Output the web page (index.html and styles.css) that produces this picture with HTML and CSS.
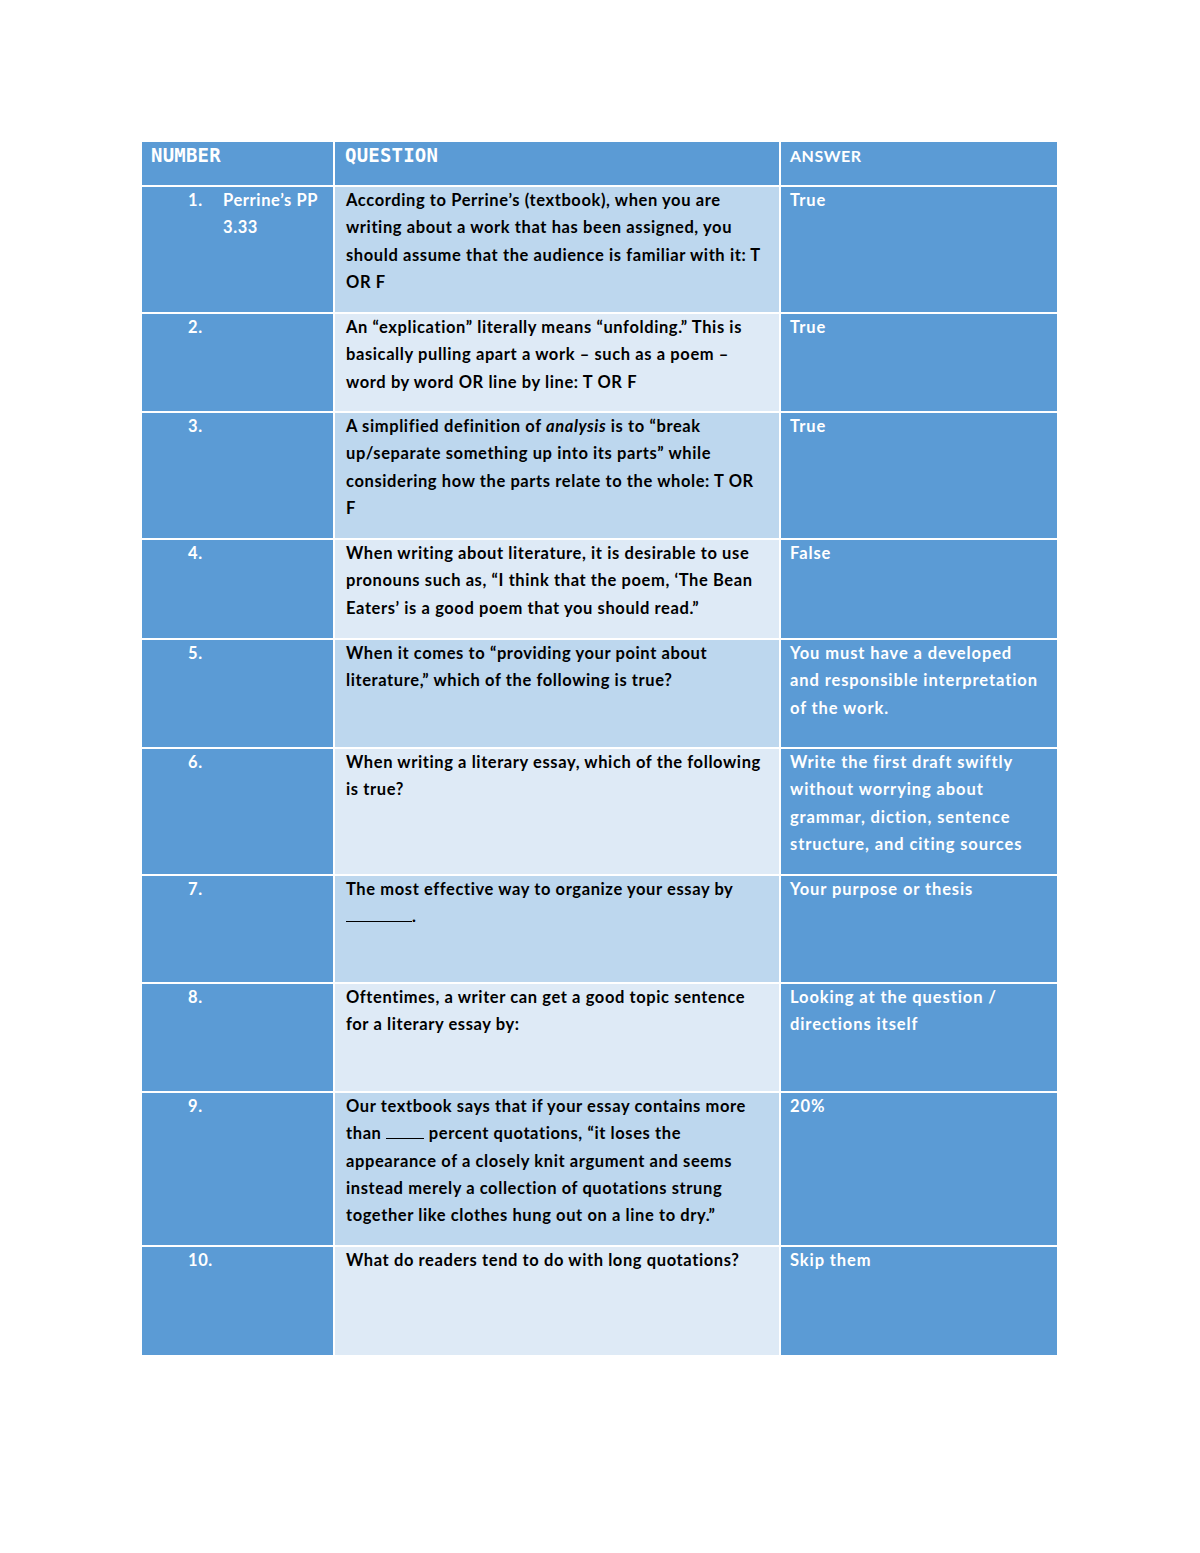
FILE: index.html
```html
<!DOCTYPE html>
<html>
<head>
<meta charset="utf-8">
<link rel="stylesheet" href="styles.css">
</head>
<body>
<div class="page">
  <div class="table">
    <div class="cell head h-num">NUMBER</div>
    <div class="cell head h-q">QUESTION</div>
    <div class="cell head h-a">ANSWER</div>

    <div class="cell num r1"><span class="n">1.</span><span class="nt">Perrine’s PP<br>3.33</span></div>
    <div class="cell q dark">According to Perrine’s (textbook), when you are<br>writing about a work that has been assigned, you<br>should assume that the audience is familiar with it: T<br>OR F</div>
    <div class="cell a">True</div>

    <div class="cell num r2"><span class="n">2.</span></div>
    <div class="cell q light">An “explication” literally means “unfolding.” This is<br>basically pulling apart a work – such as a poem –<br>word by word OR line by line: T OR F</div>
    <div class="cell a">True</div>

    <div class="cell num r3"><span class="n">3.</span></div>
    <div class="cell q dark">A simplified definition of <i>analysis</i> is to “break<br>up/separate something up into its parts” while<br>considering how the parts relate to the whole: T OR<br>F</div>
    <div class="cell a">True</div>

    <div class="cell num r4"><span class="n">4.</span></div>
    <div class="cell q light">When writing about literature, it is desirable to use<br>pronouns such as, “I think that the poem, ‘The Bean<br>Eaters’ is a good poem that you should read.”</div>
    <div class="cell a">False</div>

    <div class="cell num r5"><span class="n">5.</span></div>
    <div class="cell q dark">When it comes to “providing your point about<br>literature,” which of the following is true?</div>
    <div class="cell a">You must have a developed<br>and responsible interpretation<br>of the work.</div>

    <div class="cell num r6"><span class="n">6.</span></div>
    <div class="cell q light">When writing a literary essay, which of the following<br>is true?</div>
    <div class="cell a">Write the first draft swiftly<br>without worrying about<br>grammar, diction, sentence<br>structure, and citing sources</div>

    <div class="cell num r7"><span class="n">7.</span></div>
    <div class="cell q dark">The most effective way to organize your essay by<br><span class="blank blank-long"></span>.</div>
    <div class="cell a">Your purpose or thesis</div>

    <div class="cell num r8"><span class="n">8.</span></div>
    <div class="cell q light">Oftentimes, a writer can get a good topic sentence<br>for a literary essay by:</div>
    <div class="cell a">Looking at the question /<br>directions itself</div>

    <div class="cell num r9"><span class="n">9.</span></div>
    <div class="cell q dark">Our textbook says that if your essay contains more<br>than <span class="blank blank-short"></span> percent quotations, “it loses the<br>appearance of a closely knit argument and seems<br>instead merely a collection of quotations strung<br>together like clothes hung out on a line to dry.”</div>
    <div class="cell a">20%</div>

    <div class="cell num r10"><span class="n">10.</span></div>
    <div class="cell q light">What do readers tend to do with long quotations?</div>
    <div class="cell a">Skip them</div>
  </div>
</div>
</body>
</html>
```
FILE: styles.css
```css
html, body {
  margin: 0;
  padding: 0;
  background: #ffffff;
}
.page {
  width: 1200px;
  height: 1553px;
  padding-top: 142px;
  padding-left: 142px;
  box-sizing: border-box;
}
.table {
  display: grid;
  grid-template-columns: 191px 444px 276px;
  grid-template-rows: 43px 125px 97px 125px 98px 107px 125px 106px 107px 152px 108px;
  gap: 2px;
  width: 915px;
}
.cell {
  font-family: Lato, "Liberation Sans", sans-serif;
  font-weight: 700;
  font-size: 16.5px;
  line-height: 27.3px;
  white-space: nowrap;
  box-sizing: border-box;
  padding-top: 0px;
}
.head {
  background: #5b9bd5;
  color: #ffffff;
}
.h-num, .h-q {
  font-family: "DejaVu Sans Mono", "Liberation Mono", monospace;
  font-size: 19px;
  padding-left: 9px;
  letter-spacing: 0.2px;
}
.h-q {
  padding-left: 10px;
}
.h-a {
  font-size: 16px;
  padding-left: 9px;
  letter-spacing: 0.5px;
}
.num {
  background: #5b9bd5;
  color: #ffffff;
  display: flex;
  padding-left: 46px;
  letter-spacing: 0.6px;
}
.n {
  width: 35px;
  flex: none;
}
.q {
  color: #000000;
  padding-left: 11px;
  letter-spacing: 0.6px;
}
.q.dark { background: #bdd7ee; }
.q.light { background: #deeaf6; }
.a {
  background: #5b9bd5;
  color: #ffffff;
  padding-left: 9px;
  letter-spacing: 0.9px;
}
.blank {
  display: inline-block;
  border-bottom: 1.5px solid #000000;
  vertical-align: baseline;
  height: 1px;
}
.blank-long { width: 66px; }
.blank-short { width: 38px; }
```
